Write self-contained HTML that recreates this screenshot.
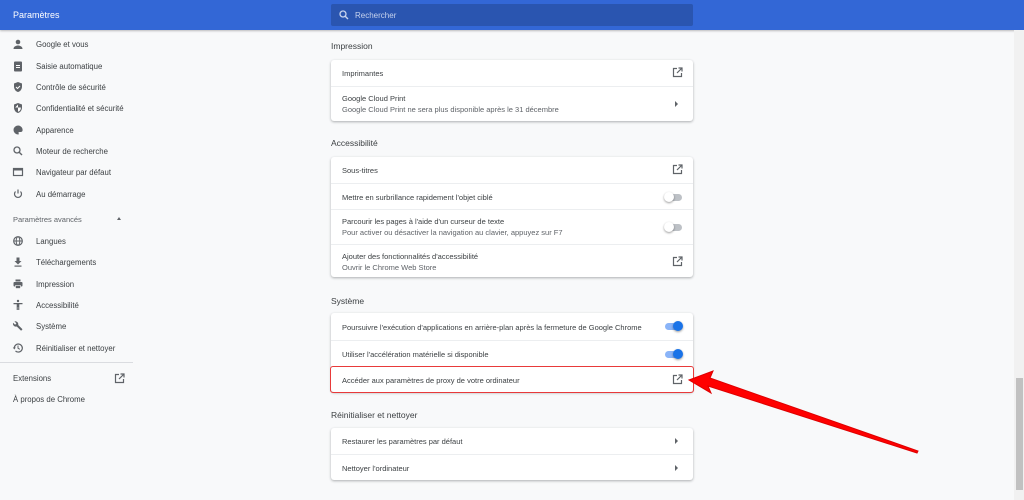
<!DOCTYPE html>
<html><head><meta charset="utf-8"><style>
*{box-sizing:border-box;margin:0;padding:0}
body{width:1024px;height:500px;overflow:hidden;background:#f8f9fa;font-family:"Liberation Sans",sans-serif;font-size:7.5px;color:#202124;position:relative}
.hdr{position:absolute;left:0;top:0;width:1024px;height:30px;background:#3367d6;box-shadow:0 1px 2px rgba(0,0,0,.25)}
.hdr .t{position:absolute;left:13px;top:10px;color:#fff;font-size:9px}
.search{position:absolute;left:331px;top:4px;width:362px;height:22px;background:#2a55b0;border-radius:2px}
.search span{position:absolute;left:24px;top:7px;color:#c8d4ee;font-size:8px}
.nav{position:absolute;left:0;font-size:7.8px;color:#3c4043}
.nav svg{position:absolute;left:12px;top:-2px}
.nav .l{position:absolute;left:36px;top:0;white-space:nowrap}
.h{position:absolute;left:331px;font-size:8.5px;color:#3c4043}
.card{position:absolute;left:331px;width:362px;background:#fff;border-radius:3px;box-shadow:0 1px 2px rgba(60,64,67,.3),0 1px 3px rgba(60,64,67,.12)}
.row{position:relative;border-top:1px solid #eceef0;padding-left:11px}
.row:first-child{border-top:none}
.row .a{position:absolute;left:11px;white-space:nowrap;color:#3c4043}
.row .b{position:absolute;left:11px;white-space:nowrap;color:#5f6368}
.ext{position:absolute;right:10px;width:11px;height:11px}
.arr{position:absolute;right:15px;width:0;height:0;border-left:3px solid #5f6368;border-top:3px solid transparent;border-bottom:3px solid transparent}
.tg{position:absolute;right:11px;width:17px;height:7px;border-radius:4px;background:#bdc1c6}
.tg:after{content:"";position:absolute;left:-1px;top:-2px;width:10px;height:10px;border-radius:50%;background:#fff;box-shadow:0 1px 2px rgba(0,0,0,.4)}
.tg.on{background:#8ab4f8}
.tg.on:after{left:auto;right:-1px;background:#1a73e8}
</style></head><body>
<svg width="0" height="0" style="position:absolute"><defs><symbol id="ex" viewBox="0 0 11 11"><path d="M5 1.5H1.5v8h8V6" fill="none" stroke="#5f6368" stroke-width="1.2"/><path d="M6.5 1h3.5v3.5" fill="none" stroke="#5f6368" stroke-width="1.2"/><path d="M10 1L5 6" stroke="#5f6368" stroke-width="1.2"/></symbol></defs></svg>
<div class="hdr"><div class="t">Paramètres</div>
<div class="search"><svg style="position:absolute;left:8px;top:6px" width="10" height="10" viewBox="0 0 10 10"><circle cx="4" cy="4" r="3" fill="none" stroke="#c8d4ee" stroke-width="1.3"/><path d="M6.2 6.2L9 9" stroke="#c8d4ee" stroke-width="1.4"/></svg><span>Rechercher</span></div></div>

<div class="nav" style="top:40px"><svg width="12" height="12" viewBox="0 0 12 12"><circle cx="6" cy="4" r="2.3" fill="#5f6368"/><path d="M1.5 11c0-2.5 2.5-3.5 4.5-3.5s4.5 1 4.5 3.5z" fill="#5f6368"/></svg><span class="l">Google et vous</span></div>
<div class="nav" style="top:62px"><svg width="12" height="12" viewBox="0 0 12 12"><rect x="2" y="1.5" width="8" height="10" rx="1" fill="#5f6368"/><rect x="4" y="5" width="4" height="1" fill="#fff"/><rect x="4" y="7" width="4" height="1" fill="#fff"/></svg><span class="l">Saisie automatique</span></div>
<div class="nav" style="top:83px"><svg width="12" height="12" viewBox="0 0 12 12"><path d="M6 1L2 2.5v3c0 3 2 5 4 5.5 2-.5 4-2.5 4-5.5v-3z" fill="#5f6368"/><path d="M4 6l1.5 1.5L8 5" stroke="#fff" fill="none"/></svg><span class="l">Contrôle de sécurité</span></div>
<div class="nav" style="top:104px"><svg width="12" height="12" viewBox="0 0 12 12"><path d="M6 1L2 2.5v3c0 3 2 5 4 5.5 2-.5 4-2.5 4-5.5v-3z" fill="#5f6368"/><path d="M6 2.5v3H3.2M6 5.5h2.8v0.5c0 2-1.2 3.2-2.8 3.8z" fill="#fff"/></svg><span class="l">Confidentialité et sécurité</span></div>
<div class="nav" style="top:126px"><svg width="12" height="12" viewBox="0 0 12 12"><path d="M6 1.5a4.5 4.5 0 000 9c.8 0 1-.6.6-1.2-.4-.6 0-1.3.8-1.3h1.2a2 2 0 002-2C10.6 3.5 8.6 1.5 6 1.5z" fill="#5f6368"/></svg><span class="l">Apparence</span></div>
<div class="nav" style="top:147px"><svg width="12" height="12" viewBox="0 0 12 12"><circle cx="5" cy="5" r="3" fill="none" stroke="#5f6368" stroke-width="1.3"/><path d="M7.2 7.2L10 10" stroke="#5f6368" stroke-width="1.4"/></svg><span class="l">Moteur de recherche</span></div>
<div class="nav" style="top:168px"><svg width="12" height="12" viewBox="0 0 12 12"><rect x="1.5" y="2.5" width="9" height="7" fill="none" stroke="#5f6368" stroke-width="1.2"/><rect x="1.5" y="2.5" width="9" height="2" fill="#5f6368"/></svg><span class="l">Navigateur par défaut</span></div>
<div class="nav" style="top:190px"><svg width="12" height="12" viewBox="0 0 12 12"><path d="M3.5 3.5a3.5 3.5 0 105 0" fill="none" stroke="#5f6368" stroke-width="1.2"/><path d="M6 1.5v4" stroke="#5f6368" stroke-width="1.2"/></svg><span class="l">Au démarrage</span></div>
<div class="nav" style="top:215px;left:13px;color:#5f6368;font-size:7.5px">Paramètres avancés</div>
<div style="position:absolute;left:117px;top:217px;border-left:2.5px solid transparent;border-right:2.5px solid transparent;border-bottom:3px solid #5f6368"></div>
<div class="nav" style="top:237px"><svg width="12" height="12" viewBox="0 0 12 12"><circle cx="6" cy="6" r="4.3" fill="none" stroke="#5f6368" stroke-width="1.2"/><ellipse cx="6" cy="6" rx="1.8" ry="4.3" fill="none" stroke="#5f6368"/><path d="M1.7 6h8.6" stroke="#5f6368"/></svg><span class="l">Langues</span></div>
<div class="nav" style="top:258px"><svg width="12" height="12" viewBox="0 0 12 12"><path d="M4.5 1.5h3v3.5h2L6 8.5 2.5 5h2z" fill="#5f6368"/><rect x="2.5" y="9.5" width="7" height="1.2" fill="#5f6368"/></svg><span class="l">Téléchargements</span></div>
<div class="nav" style="top:280px"><svg width="12" height="12" viewBox="0 0 12 12"><rect x="3.5" y="1.5" width="5" height="2" fill="#5f6368"/><rect x="1.5" y="4" width="9" height="4.5" rx="1" fill="#5f6368"/><rect x="3.5" y="7.5" width="5" height="3" fill="#5f6368" stroke="#fff" stroke-width=".6"/></svg><span class="l">Impression</span></div>
<div class="nav" style="top:301px"><svg width="12" height="12" viewBox="0 0 12 12"><circle cx="6" cy="2" r="1.2" fill="#5f6368"/><path d="M1.5 4h9v1.2H7.3V11H6.2V8H5.8v3H4.7V5.2H1.5z" fill="#5f6368"/></svg><span class="l">Accessibilité</span></div>
<div class="nav" style="top:322px"><svg width="12" height="12" viewBox="0 0 12 12"><path d="M10.5 9.3L6.2 5a3 3 0 00-3.8-3.6l2 2-1.3 1.3-2-2A3 3 0 004.8 6.5l4.3 4.3z" fill="#5f6368"/></svg><span class="l">Système</span></div>
<div class="nav" style="top:344px"><svg width="12" height="12" viewBox="0 0 12 12"><path d="M2.3 6a4 4 0 111.2 2.9" fill="none" stroke="#5f6368" stroke-width="1.2"/><path d="M.8 5.5h3L2.3 7.5z" fill="#5f6368"/><path d="M6 3.5V6.2l1.8 1.1" fill="none" stroke="#5f6368"/></svg><span class="l">Réinitialiser et nettoyer</span></div>
<div style="position:absolute;left:0;top:362px;width:133px;height:1px;background:#dadce0"></div>
<div class="nav" style="top:374px;left:13px;color:#3c4043">Extensions</div>
<svg style="position:absolute;left:114px;top:373px" width="11" height="11"><use href="#ex"/></svg>
<div class="nav" style="top:395px;left:13px">À propos de Chrome</div>

<div class="h" style="top:41px">Impression</div>
<div class="card" style="top:60px;height:61px">
<div class="row" style="height:26px"><span class="a" style="top:9px">Imprimantes</span><svg class="ext" style="top:7px"><use href="#ex"/></svg></div>
<div class="row" style="height:35px"><span class="a" style="top:7px">Google Cloud Print</span><span class="b" style="top:18px">Google Cloud Print ne sera plus disponible après le 31 décembre</span><div class="arr" style="top:14px"></div></div>
</div>
<div class="h" style="top:138px">Accessibilité</div>
<div class="card" style="top:157px;height:120px">
<div class="row" style="height:26px"><span class="a" style="top:9px">Sous-titres</span><svg class="ext" style="top:7px"><use href="#ex"/></svg></div>
<div class="row" style="height:26px"><span class="a" style="top:9px">Mettre en surbrillance rapidement l'objet ciblé</span><div class="tg" style="top:10px"></div></div>
<div class="row" style="height:35px"><span class="a" style="top:7px">Parcourir les pages à l'aide d'un curseur de texte</span><span class="b" style="top:18px">Pour activer ou désactiver la navigation au clavier, appuyez sur F7</span><div class="tg" style="top:14px"></div></div>
<div class="row" style="height:33px"><span class="a" style="top:7px">Ajouter des fonctionnalités d'accessibilité</span><span class="b" style="top:18px">Ouvrir le Chrome Web Store</span><svg class="ext" style="top:11px"><use href="#ex"/></svg></div>
</div>
<div class="h" style="top:296px">Système</div>
<div class="card" style="top:313px;height:79px">
<div class="row" style="height:27px"><span class="a" style="top:10px">Poursuivre l'exécution d'applications en arrière-plan après la fermeture de Google Chrome</span><div class="tg on" style="top:10px"></div></div>
<div class="row" style="height:26px"><span class="a" style="top:9px">Utiliser l'accélération matérielle si disponible</span><div class="tg on" style="top:10px"></div></div>
<div class="row" style="height:26px"><span class="a" style="top:9px">Accéder aux paramètres de proxy de votre ordinateur</span><svg class="ext" style="top:7px"><use href="#ex"/></svg></div>
</div>
<div style="position:absolute;left:330px;top:366px;width:364px;height:27px;border:1.5px solid #e83a3a;border-radius:3px"></div>
<div class="h" style="top:410px">Réinitialiser et nettoyer</div>
<div class="card" style="top:428px;height:52px">
<div class="row" style="height:26px"><span class="a" style="top:9px">Restaurer les paramètres par défaut</span><div class="arr" style="top:10px"></div></div>
<div class="row" style="height:26px"><span class="a" style="top:9px">Nettoyer l'ordinateur</span><div class="arr" style="top:10px"></div></div>
</div>

<div style="position:absolute;left:1014px;top:30px;width:10px;height:470px;background:#f1f1f1"></div>
<div style="position:absolute;left:1016px;top:378px;width:7px;height:112px;background:#c1c1c1"></div>

<svg style="position:absolute;left:0;top:0" width="1024" height="500">
<polygon points="689,380 713,371 710,378 918,451 917,453 708,386 711,393" fill="#f00" stroke="#d00" stroke-width="1"/>
</svg>
</body></html>
